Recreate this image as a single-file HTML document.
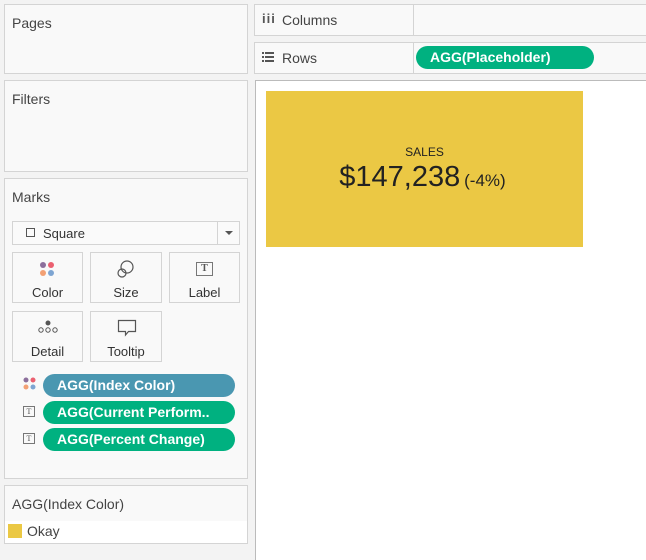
<!DOCTYPE html>
<html><head><meta charset="utf-8"><style>
*{box-sizing:border-box;margin:0;padding:0}
body{width:646px;height:550px;background:#f3f3f3;font-family:"Liberation Sans",sans-serif;color:#333;position:relative;overflow:hidden;font-size:14px}
.p{position:absolute;background:#f9f9f9;border:1px solid #d4d4d4}
.t{position:absolute;font-size:14px;color:#444}
.btn{position:absolute;border:1px solid #d4d4d4;background:#f9f9f9;width:71px;height:51px;text-align:center;font-size:13px;color:#333}
.btn span{position:absolute;left:0;right:0;bottom:2px}
.pill{position:absolute;height:23px;border-radius:12px;color:#fff;font-weight:bold;font-size:14px;line-height:23px;padding-left:14px;white-space:nowrap;overflow:hidden}
.ti{position:absolute;width:12px;height:11px;border:1px solid #777;font-size:8px;line-height:9px;text-align:center;color:#555;font-family:"Liberation Serif",serif}
</style></head><body>
<div class="p" style="left:4px;top:4px;width:244px;height:70px"></div>
<div class="t" style="left:12px;top:15px">Pages</div>
<div class="p" style="left:4px;top:80px;width:244px;height:92px"></div>
<div class="t" style="left:12px;top:91px">Filters</div>
<div class="p" style="left:4px;top:178px;width:244px;height:301px"></div>
<div class="t" style="left:12px;top:189px">Marks</div>
<div style="position:absolute;left:12px;top:221px;width:228px;height:24px;border:1px solid #d4d4d4;background:#fafafa"></div>
<div style="position:absolute;left:26px;top:228px;width:9px;height:9px;border:1px solid #555"></div>
<div style="position:absolute;left:43px;top:226px;font-size:13px;color:#333">Square</div>
<div style="position:absolute;left:217px;top:222px;width:1px;height:22px;background:#d4d4d4"></div>
<div style="position:absolute;left:225px;top:231px;border-left:4px solid transparent;border-right:4px solid transparent;border-top:4px solid #555"></div>
<div class="btn" style="left:12px;top:252px"><svg style="position:absolute;left:26px;top:8px" width="16" height="16"><circle cx="4" cy="4" r="3" fill="#8c6f9c"/><circle cx="12" cy="4" r="3" fill="#eb6070"/><circle cx="4" cy="12" r="3" fill="#f2a074"/><circle cx="12" cy="12" r="3" fill="#7ea5d2"/></svg><span>Color</span></div>
<div class="btn" style="left:90px;top:252px;width:72px"><svg style="position:absolute;left:25px;top:6px" width="20" height="20" fill="none" stroke="#555" stroke-width="1.2"><circle cx="11" cy="8" r="6"/><circle cx="6" cy="14" r="4"/></svg><span>Size</span></div>
<div class="btn" style="left:169px;top:252px"><div class="ti" style="left:26px;top:9px;width:17px;height:14px;font-size:10px;line-height:12px;font-weight:bold">T</div><span>Label</span></div>
<div class="btn" style="left:12px;top:311px"><svg style="position:absolute;left:24px;top:8px" width="22" height="14" fill="none" stroke="#555"><circle cx="11" cy="3" r="2" fill="#555"/><circle cx="4" cy="10" r="2.2"/><circle cx="11" cy="10" r="2.2"/><circle cx="18" cy="10" r="2.2"/></svg><span>Detail</span></div>
<div class="btn" style="left:90px;top:311px;width:72px"><svg style="position:absolute;left:26px;top:7px" width="20" height="18" fill="none" stroke="#555" stroke-width="1.2"><path d="M1.5 1.5h17v11h-7l-3 3.5v-3.5h-7z"/></svg><span>Tooltip</span></div>
<svg style="position:absolute;left:23px;top:377px" width="14" height="14"><circle cx="3" cy="3" r="2.5" fill="#8c6f9c"/><circle cx="10" cy="3" r="2.5" fill="#eb6070"/><circle cx="3" cy="10" r="2.5" fill="#f2a074"/><circle cx="10" cy="10" r="2.5" fill="#7ea5d2"/></svg>
<div class="pill" style="left:43px;top:374px;width:192px;background:#4a97b1">AGG(Index Color)</div>
<div class="ti" style="left:23px;top:406px">T</div>
<div class="pill" style="left:43px;top:401px;width:192px;background:#00b180">AGG(Current Perform..</div>
<div class="ti" style="left:23px;top:433px">T</div>
<div class="pill" style="left:43px;top:428px;width:192px;background:#00b180">AGG(Percent Change)</div>
<div class="p" style="left:4px;top:485px;width:244px;height:59px"></div>
<div class="t" style="left:12px;top:496px">AGG(Index Color)</div>
<div style="position:absolute;left:5px;top:521px;width:242px;height:22px;background:#fff"></div>
<div style="position:absolute;left:8px;top:524px;width:14px;height:14px;background:#ebc844"></div>
<div style="position:absolute;left:27px;top:523px;font-size:14px;color:#444">Okay</div>

<div class="p" style="left:254px;top:4px;width:400px;height:32px"></div>
<div style="position:absolute;left:413px;top:5px;width:1px;height:30px;background:#d4d4d4"></div>
<div style="position:absolute;left:262px;top:11px;font-size:13px;font-weight:bold;color:#555;letter-spacing:1px">iii</div>
<div class="t" style="left:282px;top:12px">Columns</div>
<div class="p" style="left:254px;top:42px;width:400px;height:32px"></div>
<div style="position:absolute;left:413px;top:43px;width:1px;height:30px;background:#d4d4d4"></div>
<svg style="position:absolute;left:262px;top:52px" width="12" height="10" fill="#555"><rect x="0" y="0" width="2" height="2"/><rect x="3" y="0" width="9" height="2"/><rect x="0" y="4" width="2" height="2"/><rect x="3" y="4" width="9" height="2"/><rect x="0" y="8" width="2" height="2"/><rect x="3" y="8" width="9" height="2"/></svg>
<div class="t" style="left:282px;top:50px">Rows</div>
<div class="pill" style="left:416px;top:46px;width:178px;background:#00b180">AGG(Placeholder)</div>

<div style="position:absolute;left:255px;top:80px;width:400px;height:480px;background:#fff;border-left:1px solid #bbb;border-top:1px solid #bbb"></div>
<div style="position:absolute;left:266px;top:91px;width:317px;height:156px;background:#ebc844"></div>
<div style="position:absolute;left:266px;top:145px;width:317px;text-align:center;font-size:12px;color:#222">SALES</div>
<div style="position:absolute;left:264px;top:161px;width:317px;text-align:center;color:#222"><span style="font-size:29px">$147,238</span> <span style="font-size:17px">(-4%)</span></div>
</body></html>
